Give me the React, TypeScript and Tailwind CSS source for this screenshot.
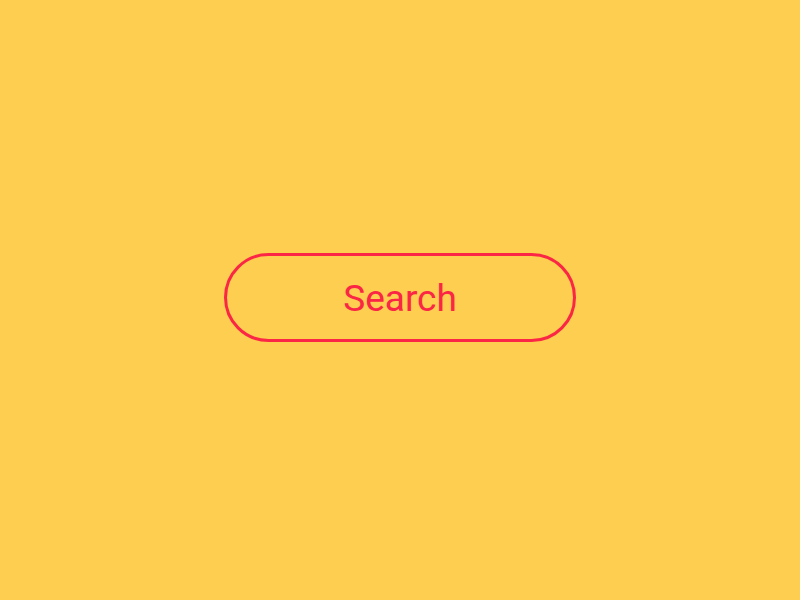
export default function App() {
  return (
    <div className="w-full h-screen bg-[#fdce4f] flex items-center justify-center">
      <button
        className="w-[352px] h-[89px] mb-[6px] pt-[3px] rounded-full border-[3px] border-[#fb2645] text-[#fb2645] text-[37px] flex items-center justify-center"
        style={{ fontFamily: 'Roboto, sans-serif' }}
      >
        Search
      </button>
    </div>
  )
}
